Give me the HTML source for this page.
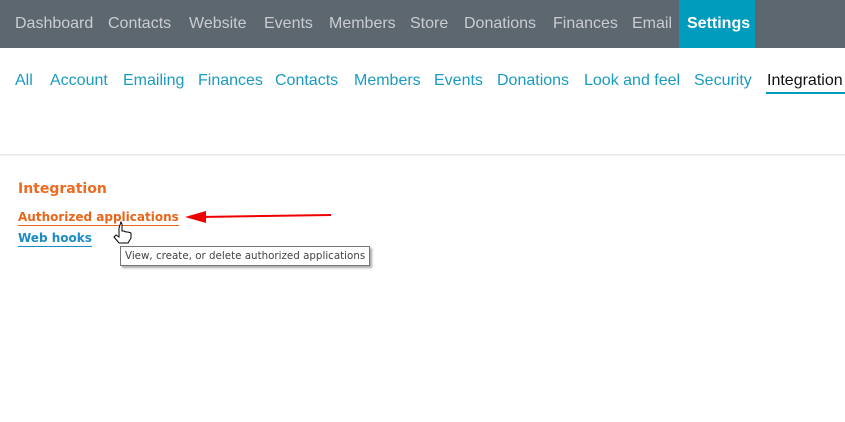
<!DOCTYPE html>
<html><head><style>
body{margin:0;width:845px;height:422px;background:#fff;position:relative;overflow:hidden;font-family:"Liberation Sans",sans-serif}
.top{position:absolute;left:0;top:0;width:845px;height:48px;background:#5c6770}
.top span{position:absolute;top:15px;font-size:16px;color:#c9cdd1;white-space:nowrap}
.set{position:absolute;left:679px;top:0;width:76px;height:48px;background:#009cbd}
.sub span{position:absolute;top:72px;font-size:16px;color:#1a9bc0;white-space:nowrap}
.shadow{position:absolute;left:0;top:154px;width:845px;height:3px;background:linear-gradient(#e4e4e4,#fff)}
.v{font-family:"DejaVu Sans",Verdana,sans-serif}
</style></head><body>
<div class="top">
<div class="set"></div>
<span style="left:15px">Dashboard</span>
<span style="left:108px">Contacts</span>
<span style="left:189px">Website</span>
<span style="left:264px">Events</span>
<span style="left:329px">Members</span>
<span style="left:410px">Store</span>
<span style="left:464px">Donations</span>
<span style="left:553px">Finances</span>
<span style="left:632px">Email</span>
<span style="left:687px;color:#fff;font-weight:bold">Settings</span>
</div>
<div class="sub">
<span style="left:15px">All</span>
<span style="left:50px">Account</span>
<span style="left:123px">Emailing</span>
<span style="left:198px">Finances</span>
<span style="left:275px">Contacts</span>
<span style="left:354px">Members</span>
<span style="left:434px">Events</span>
<span style="left:497px">Donations</span>
<span style="left:584px">Look and feel</span>
<span style="left:694px">Security</span>
<span style="left:767px;color:#111">Integration</span>
</div>
<div style="position:absolute;left:766px;top:92px;width:79px;height:2px;background:#009cbd"></div>
<div class="shadow"></div>
<div class="v" style="position:absolute;left:18px;top:181px;font-size:14px;font-weight:bold;color:#ee6a1f">Integration</div>
<div class="v" style="position:absolute;left:18px;top:210px;font-size:12px;font-weight:bold;color:#e8661a;border-bottom:1px solid #e8661a;line-height:15px">Authorized applications</div>
<div class="v" style="position:absolute;left:18px;top:231px;font-size:12px;font-weight:bold;color:#1a8cc6;border-bottom:1px solid #1a8cc6;line-height:15px">Web hooks</div>
<svg style="position:absolute;left:0;top:0" width="845" height="422">
<line x1="200" y1="217" x2="331" y2="215" stroke="#e00" stroke-width="2"/>
<polygon points="185,217 206,211 206,223" fill="#e00"/>
<path d="M119,228 L119,237 L116,235 L114,237 L119,243 L128,243 L131,238 L131,233 L128,232 L126,232 L124,231 L122,231 L122,224 L121,222 Z" fill="#fff" stroke="#000" stroke-width="1"/>
</svg>
<div class="v" style="position:absolute;left:120px;top:246px;border:1px solid #767676;background:#fff;font-size:10.3px;color:#444;padding:2px 4px;line-height:14px;box-shadow:2px 2px 2px #aaa;white-space:nowrap">View, create, or delete authorized applications</div>
</body></html>
